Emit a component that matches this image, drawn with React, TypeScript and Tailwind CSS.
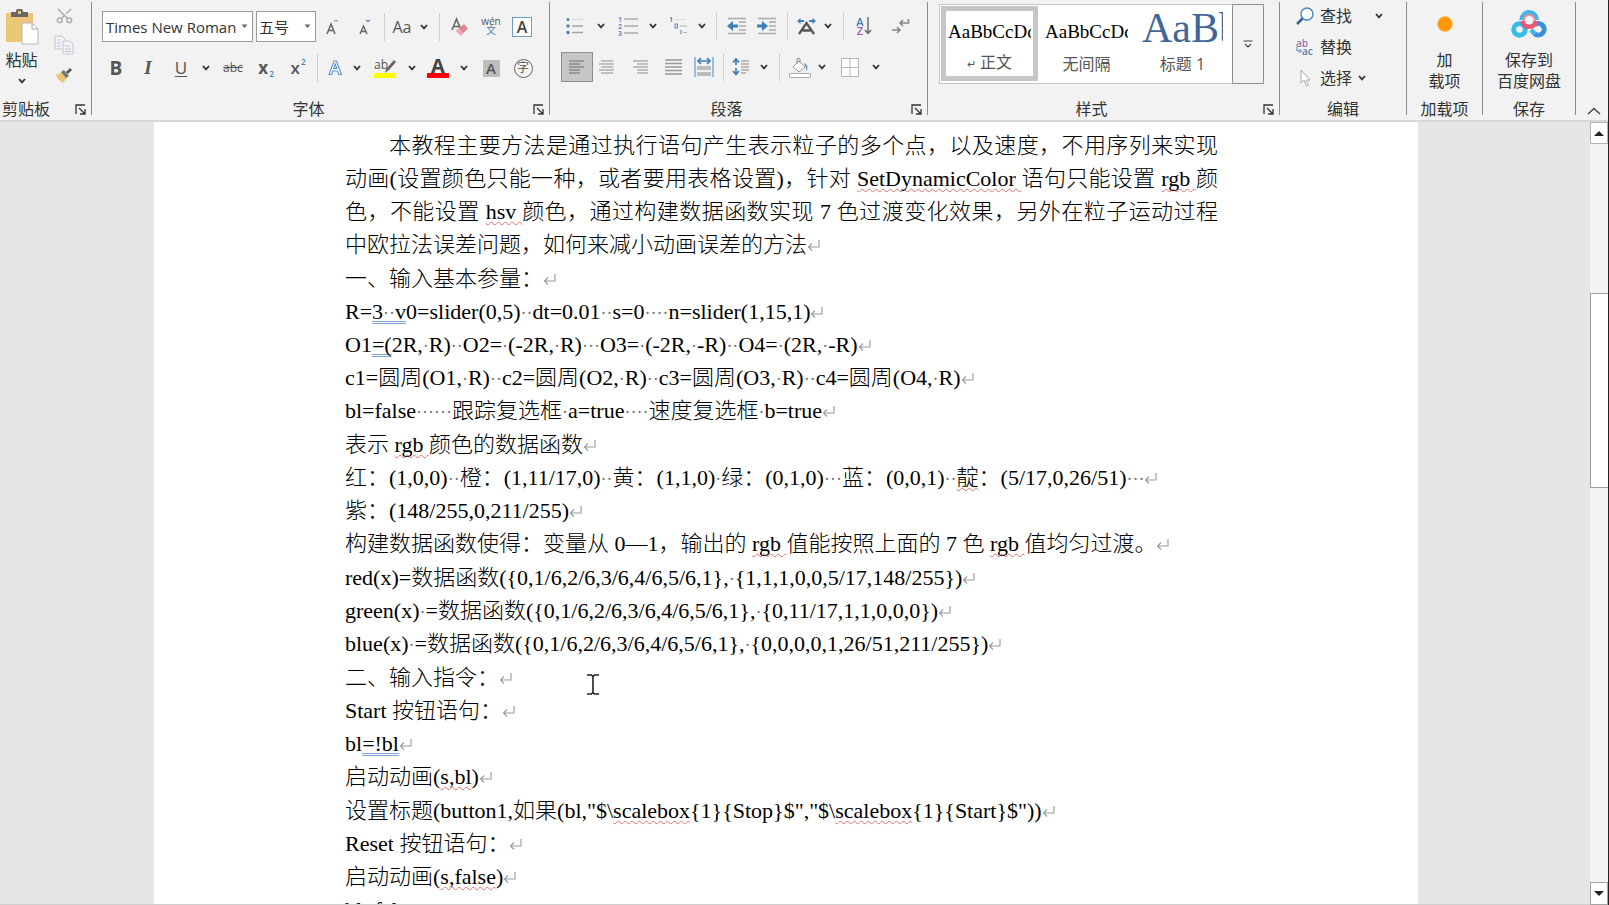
import React from "react";
import { Scissors } from "lucide-react";

interface ToolProps {
  label: string;
  className: string;
  children: React.ReactNode;
}

const Tool: React.FC<ToolProps> = ({ label, className, children }) => (
  <button
    type="button"
    aria-label={label}
    className={`flex h-[30px] shrink-0 items-center justify-center ${className}`}
  >
    {children}
  </button>
);

const Chevron: React.FC = () => (
  <svg width="8" height="6" viewBox="0 0 8 6" fill="none" stroke="#333" strokeWidth="1.8">
    <path d="M1 1l3 3.4L7 1" />
  </svg>
);

const Sep: React.FC<{ className: string }> = ({ className }) => (
  <span className={`h-[28px] w-px shrink-0 bg-[#cfcfcf] ${className}`} />
);

interface GroupProps {
  title: string;
  className: string;
  titleClass?: string;
  launcher?: boolean;
  children: React.ReactNode;
}

const Group: React.FC<GroupProps> = ({ title, className, titleClass = "text-center", launcher, children }) => (
  <section aria-label={title} className={`flex shrink-0 flex-col ${className}`}>
    <div className="h-[98px]">{children}</div>
    <div className="flex h-[22px] items-center">
      <span className={`flex-1 ${titleClass}`}>{title}</span>
      {launcher && (
        <button type="button" aria-label={`${title}设置`} className="mr-[5px]">
          <svg width="11" height="11" viewBox="0 0 11 11" fill="none" stroke="#333" strokeWidth="1.3">
            <path d="M1 10V1h9M4 4l5.5 5.5M10 5v5H5" />
          </svg>
        </button>
      )}
    </div>
  </section>
);

const Divider: React.FC = () => <span className="mt-[2px] h-[113px] w-px shrink-0 bg-[#8c8c8c]" />;

const Triangle: React.FC = () => (
  <svg className="pointer-events-none absolute top-3 right-1" width="9" height="6" viewBox="0 0 9 6">
    <path d="M1.5 1.5h6L4.5 5z" fill="#666" />
  </svg>
);

const ClipboardGroup: React.FC = () => (
  <Group title="剪贴板" launcher className="w-[91px]" titleClass="pl-[2px]">
    <div className="flex">
      <button type="button" className="flex w-[43px] flex-col items-center pt-2">
        <svg width="34" height="37" viewBox="0 0 34 37">
          <path d="M1 5h27v29H1z" fill="#ecc577" />
          <path d="M6 4h5V2.500a2 2 0 0 1 2-1.500h3a2 2 0 0 1 2 1.500V4h5v5H6z" fill="#666" />
          <path d="M13 3h3v3h-3z" fill="#ecc577" />
          <path d="M17 15h10l6 6v15H17z" fill="#fff" stroke="#b5b5b5" />
          <path d="M27 15v6h6" fill="none" stroke="#aaa" />
        </svg>
        <span className="mt-[3px] leading-6">粘贴</span>
        <span className="mt-[6px]">
          <Chevron />
        </span>
      </button>
      <div className="flex flex-col">
        <Tool label="剪切" className="w-[42px]">
          <Scissors size={19} strokeWidth={1.8} color="#aaa" className="-rotate-90" />
        </Tool>
        <Tool label="复制" className="w-[42px]">
          <svg width="20" height="20" viewBox="0 0 20 20" fill="#f5f2f7" stroke="#c8c2cf">
            <path d="M1 1h7l3 3v10H1z" />
            <path d="M9 6h7l3 3v10H9z" />
            <path d="M3 5h4M3 8h4M3 11h4M11 11h5M11 14h6M11 16.500h6" />
          </svg>
        </Tool>
        <Tool label="格式刷" className="w-[42px]">
          <svg width="16" height="15" viewBox="0 0 16 15">
            <path d="M0 7l6-3 5 6-4 5c-2-1-6-4-7-8z" fill="#ecc577" />
            <path d="M5 4l3-2 5 6-3 2z" fill="#777" />
            <path d="M10 4l4-4 2 2-4 4z" fill="#555" />
          </svg>
        </Tool>
      </div>
    </div>
  </Group>
);

const FontGroup: React.FC = () => (
  <Group title="字体" launcher className="w-[457px]" titleClass="pr-2 text-center">
    <div className="flex items-center pt-[11px] pl-[10px]">
      <div className="relative mr-[3px] w-[151px]">
        <select
          aria-label="字体名称"
          className="h-[31px] w-full appearance-none border border-[#9a9a9a] bg-white pl-[3px] text-[15px] leading-6"
        >
          <option>Times New Roman</option>
        </select>
        <Triangle />
      </div>
      <div className="relative w-[60px]">
        <select
          aria-label="字号"
          className="h-[31px] w-full appearance-none border border-[#9a9a9a] bg-white pl-[2px] text-[15px] leading-6"
        >
          <option>五号</option>
        </select>
        <Triangle />
      </div>
      <Tool label="增大字号" className="w-[32px]">
        <svg width="12" height="18" viewBox="0 0 12 18" fill="none" stroke="#666" strokeWidth="1.5">
          <path d="M1 16L5 6l4 10M2.500 12.500h5" />
          <path d="M8 3.500L10 2l2 1.500" stroke="#6b8fb5" strokeWidth="1" />
        </svg>
      </Tool>
      <Tool label="减小字号" className="w-[34px]">
        <svg width="14" height="18" viewBox="0 0 14 18" fill="none" stroke="#666" strokeWidth="1.4">
          <path d="M2 16l3.500-8L9 16M3.500 13.500h4" />
          <path d="M8 2l2 1.500L12 2" stroke="#4d86bf" strokeWidth="1.200" />
        </svg>
      </Tool>
      <Sep className="mx-[2px]" />
      <Tool label="更改大小写" className="w-[30px] text-[16px] text-[#555]">
        Aa
      </Tool>
      <Tool label="大小写选项" className="w-[14px]">
        <Chevron />
      </Tool>
      <Sep className="mx-2" />
      <Tool label="清除格式" className="w-[24px]">
        <svg width="18" height="20" viewBox="0 0 18 20" fill="none">
          <path d="M1 13L5.500 2 10 13M3 9.500h5.500" stroke="#666" strokeWidth="1.6" />
          <path d="M5 14l8-7 4 4.500-7 7z" fill="#e08596" />
          <path d="M5 14l3-2.500 4.500 4.500L10 18.500z" fill="#eda9b4" />
        </svg>
      </Tool>
      <Tool label="拼音指南" className="w-[38px] flex-col text-[10px] text-[#555]">
        <span className="leading-[8px]">wén</span>
        <span className="leading-[11px] text-[#4d7fb8]">文</span>
      </Tool>
      <Tool label="字符边框" className="w-[24px]">
        <span className="flex size-5 items-center justify-center border border-[#6d9dcb] bg-white text-[16px] font-semibold text-[#444]">
          A
        </span>
      </Tool>
    </div>
    <div className="flex items-center pt-[11px] pl-[10px] text-[#555]">
      <Tool label="加粗" className="w-[28px] text-[19px] font-bold">
        B
      </Tool>
      <Tool label="倾斜" className="w-[36px] font-['Liberation_Serif',serif] text-[19px] font-bold italic">
        I
      </Tool>
      <Tool label="下划线" className="w-[30px] text-[17px] underline underline-offset-2">
        U
      </Tool>
      <Tool label="下划线选项" className="w-[20px]">
        <Chevron />
      </Tool>
      <Tool label="删除线" className="w-[34px] text-[12px] line-through">
        abc
      </Tool>
      <Tool label="下标" className="w-[32px] gap-px">
        <span className="text-[17px] font-bold">x</span>
        <span className="pt-3 text-[8px] leading-[8px] font-semibold text-[#3f7fbf]">2</span>
      </Tool>
      <Tool label="上标" className="w-[32px] gap-px">
        <span className="text-[17px] font-semibold">x</span>
        <span className="pb-3 text-[8px] leading-[8px] font-semibold text-[#3f7fbf]">2</span>
      </Tool>
      <Sep className="mx-[3px]" />
      <Tool label="文本效果" className="w-[28px]">
        <svg width="15" height="16" viewBox="0 0 15 16" fill="#fff" stroke="#5b93cf" strokeWidth="1.1">
          <path d="M1 14.500L6 1h2.500l5 13.500h-2.700l-1.200-3.500H4.900l-1.200 3.500zM5.700 8.500h3.200L7.300 4z" />
        </svg>
      </Tool>
      <Tool label="文本效果选项" className="w-[16px]">
        <Chevron />
      </Tool>
      <Tool label="突出显示" className="w-[40px] flex-col">
        <span className="relative block h-[14px] w-[22px] text-left text-[12px] leading-[12px]">
          ab
          <svg className="absolute top-px right-0" width="14" height="13" viewBox="0 0 14 13">
            <path d="M12 0l2 2-7 8-4 3 1-4z" fill="#666" />
          </svg>
        </span>
        <span className="h-[5px] w-[22px] bg-[#ffff00]" />
      </Tool>
      <Tool label="突出显示颜色" className="w-[14px]">
        <Chevron />
      </Tool>
      <Tool label="字体颜色" className="w-[38px] flex-col">
        <span className="text-[20px] leading-[15px] font-bold text-[#444]">A</span>
        <span className="h-[5px] w-[22px] bg-[#fb0000]" />
      </Tool>
      <Tool label="字体颜色选项" className="w-[14px]">
        <Chevron />
      </Tool>
      <Tool label="字符底纹" className="w-[40px]">
        <span className="flex size-[17px] items-center justify-center bg-[#bdbdbd] text-[15px] font-semibold">A</span>
      </Tool>
      <Tool label="带圈字符" className="w-[24px]">
        <span className="flex size-[19px] items-center justify-center rounded-full border border-[#666] text-[12px]">
          字
        </span>
      </Tool>
    </div>
  </Group>
);

const ParagraphGroup: React.FC = () => (
  <Group title="段落" launcher className="w-[377px]" titleClass="pr-2 text-center">
    <div className="flex items-center pt-[11px] pl-[9px]">
      <Tool label="项目符号" className="w-[32px]">
        <svg width="18" height="18" viewBox="0 0 18 18" stroke="#a5a5a5" strokeWidth="1.4">
          <path d="M6 2.500h11" stroke="#ddd" />
          <path d="M6 9h11M6 15.500h11" />
          <g fill="#5580ad" stroke="none">
            <circle cx="2" cy="2.500" r="1.500" />
            <circle cx="2" cy="9" r="1.700" />
            <circle cx="2" cy="15.500" r="1.700" />
          </g>
        </svg>
      </Tool>
      <Tool label="项目符号选项" className="w-[20px]">
        <Chevron />
      </Tool>
      <Tool label="编号" className="w-[34px] gap-[2px]">
        <span className="text-[7px] leading-[7px] font-bold text-[#7a8fc0]">
          1<br />2<br />3
        </span>
        <svg width="14" height="18" viewBox="0 0 14 18" stroke="#aaa" strokeWidth="1.4">
          <path d="M0 2h14M0 9h14M0 16h14" />
        </svg>
      </Tool>
      <Tool label="编号选项" className="w-[16px]">
        <Chevron />
      </Tool>
      <Tool label="多级列表" className="w-[34px]">
        <svg width="18" height="18" viewBox="0 0 18 18" fill="none" stroke="#7a8fc0" strokeWidth="1.2">
          <path d="M1 1.500l1.500-1V5M6 7h2.500v4H6zM12 13v4" />
          <path d="M6 2.500h11" stroke="#ddd" />
          <path d="M11 9h7M14 15.500h4" stroke="#b5b5b5" />
        </svg>
      </Tool>
      <Tool label="多级列表选项" className="w-[14px]">
        <Chevron />
      </Tool>
      <Sep className="mx-[7px]" />
      <Tool label="减少缩进量" className="w-[26px]">
        <svg width="20" height="18" viewBox="0 0 20 18" stroke="#aaa" strokeWidth="1.3">
          <path d="M1 1.500h18M12 5h7M12 9h7M12 13h7M1 16.500h18" />
          <path d="M0 9l6-5v3.500h5v3H6V14z" fill="#3f7fb8" stroke="none" />
        </svg>
      </Tool>
      <Tool label="增加缩进量" className="w-[34px]">
        <svg width="20" height="18" viewBox="0 0 20 18" stroke="#aaa" strokeWidth="1.3">
          <path d="M1 1.500h18M12 5h7M12 9h7M12 13h7M1 16.500h18" />
          <path d="M11 9L5 4v3.500H0v3h5V14z" fill="#3f7fb8" stroke="none" />
        </svg>
      </Tool>
      <Sep className="mx-[3px]" />
      <Tool label="中文版式" className="w-[30px]">
        <svg width="19" height="17" viewBox="0 0 19 17" fill="none">
          <path d="M2 16L9.500 5 17 16M5.500 12.500h8" stroke="#555" strokeWidth="2.300" />
          <path d="M0 3l3.500-3v2H7v2H3.500v2zM19 3l-3.500-3v2H12v2h3.500v2z" fill="#3f7fb8" />
        </svg>
      </Tool>
      <Tool label="中文版式选项" className="w-[14px]">
        <Chevron />
      </Tool>
      <Sep className="mx-2" />
      <Tool label="排序" className="w-[24px]">
        <span className="flex flex-col text-[11px] leading-[9px] font-semibold text-[#3f7fb8]">
          A<span className="text-[#9b59a8]">Z</span>
        </span>
        <svg width="8" height="18" viewBox="0 0 8 18" fill="none" stroke="#666" strokeWidth="1.4">
          <path d="M4 0v16M1 13l3 3.500L7 13" />
        </svg>
      </Tool>
      <Tool label="显示编辑标记" className="w-[50px]">
        <svg width="18" height="16" viewBox="0 0 18 16" fill="none" stroke="#888" strokeWidth="1.6">
          <path d="M16.500 1v4H8M11 2L8 5l3 3M0 12h8M5 9l3 3-3 3" />
        </svg>
      </Tool>
    </div>
    <div className="flex items-center pt-[11px] pl-[11px]">
      <Tool label="左对齐" className="w-[32px] border border-[#8f8f8f] bg-[#c6c6c6]">
        <svg width="16" height="16" viewBox="0 0 16 16" stroke="#8a8a8a" strokeWidth="1.3">
          <path d="M0 2h15M0 5h11M0 8h15M0 11h11M0 14h11" />
        </svg>
      </Tool>
      <Tool label="居中" className="w-[28px]">
        <svg width="16" height="16" viewBox="0 0 16 16" stroke="#b0b0b0" strokeWidth="1.3">
          <path d="M2 2h12M0 5h15M2 8h12M0 11h15M2 14h12" />
        </svg>
      </Tool>
      <Tool label="右对齐" className="w-[38px]">
        <svg width="16" height="16" viewBox="0 0 16 16" stroke="#b0b0b0" strokeWidth="1.3">
          <path d="M1 2h15M5 5h11M1 8h15M5 11h11M5 14h11" />
        </svg>
      </Tool>
      <Tool label="两端对齐" className="w-[28px]">
        <svg width="17" height="18" viewBox="0 0 17 18" stroke="#999" strokeWidth="1.5">
          <path d="M0 2h17M0 5.500h17M0 9h17M0 12.500h17M0 16h17" />
        </svg>
      </Tool>
      <Tool label="分散对齐" className="w-[34px]">
        <svg width="20" height="20" viewBox="0 0 20 20" fill="none">
          <path d="M1 0v20M19 0v20" stroke="#5a9ad4" strokeWidth="1.200" />
          <path d="M3 10h14M3 12h14M3 16h14M3 18h14" stroke="#aaa" strokeWidth="1.400" />
          <path d="M4 4h12M7 1L4 4l3 3M13 1l3 3-3 3" stroke="#3f7fb8" strokeWidth="1.700" />
        </svg>
      </Tool>
      <Sep className="mx-[2px]" />
      <Tool label="行距" className="w-[30px]">
        <svg width="18" height="18" viewBox="0 0 18 18" fill="none">
          <path d="M4 2v5M4 10v6M1 4.500L4 1l3 3.500M1 13l3 3.500L7 13" stroke="#3f7fb8" strokeWidth="1.700" />
          <path d="M9 3h8M9 6h8M9 9h8M9 12h8M9 15h5" stroke="#aaa" strokeWidth="1.300" />
        </svg>
      </Tool>
      <Tool label="行距选项" className="w-[16px]">
        <Chevron />
      </Tool>
      <Sep className="mx-[7px]" />
      <Tool label="底纹" className="w-[26px]">
        <svg width="22" height="21" viewBox="0 0 22 21" fill="none">
          <path d="M4 10l6-6 6 6-6 5z" fill="#fff" stroke="#999" />
          <path d="M8 7V2a2 2 0 0 1 3 0v4" stroke="#888" />
          <path d="M15 6c3 1 4 4 3 8-1-2-1-4-3-8z" fill="#5a8fc8" />
          <path d="M.5 16.500h21v4H.5z" fill="#fff" stroke="#aaa" />
        </svg>
      </Tool>
      <Tool label="底纹选项" className="w-[18px]">
        <Chevron />
      </Tool>
      <Tool label="边框" className="w-[38px]">
        <svg width="18" height="19" viewBox="0 0 18 19" fill="#fff" stroke="#b5b5b5">
          <path d="M.5.5h17v18H.5zM9 .5v18M.5 9.500h17" />
        </svg>
      </Tool>
      <Tool label="边框选项" className="w-[14px]">
        <Chevron />
      </Tool>
    </div>
  </Group>
);

const StylesGroup: React.FC = () => (
  <Group title="样式" launcher className="w-[351px]" titleClass="pr-2 text-center">
    <div className="pt-1 pl-[11px]">
      <div className="flex h-[80px] w-[325px] border border-[#c8c8c8] bg-white text-[#555]">
        <button
          type="button"
          className="mt-px ml-px flex h-[75px] w-[97px] shrink-0 flex-col border-[5px] border-[#c6c6c6] px-[2px]"
        >
          <span className="mt-[9px] w-full overflow-hidden text-left font-['Liberation_Serif',serif] text-[19px] leading-[24px] text-black">
            AaBbCcDd
          </span>
          <span className="mt-[8px] w-full text-center leading-6">
            <small className="text-[11px]">↵</small> 正文
          </span>
        </button>
        <button type="button" className="flex w-[97px] shrink-0 flex-col px-[7px]">
          <span className="mt-[15px] w-full overflow-hidden text-left font-['Liberation_Serif',serif] text-[19px] leading-[24px] text-black">
            AaBbCcDd
          </span>
          <span className="mt-[8px] w-full text-center leading-6">无间隔</span>
        </button>
        <button type="button" className="flex flex-1 flex-col overflow-hidden pr-[10px] pl-[7px]">
          <span className="w-full overflow-hidden text-left font-['Liberation_Serif',serif] text-[42px] leading-[47px] text-[#3f6799]">
            AaBb
          </span>
          <span className="w-full text-center leading-6">标题 1</span>
        </button>
        <button
          type="button"
          aria-label="其他样式"
          className="-m-px flex w-[32px] shrink-0 items-center justify-center border border-[#8f8f8f] bg-[#f2f2f2]"
        >
          <svg width="10" height="9" viewBox="0 0 10 9" fill="none" stroke="#444" strokeWidth="1.2">
            <path d="M.5 1h9M2 4l3 3 3-3" />
          </svg>
        </button>
      </div>
    </div>
  </Group>
);

const EditGroup: React.FC = () => (
  <Group title="编辑" className="w-[126px]">
    <div className="flex flex-col gap-[7px] pt-1 pl-[16px] leading-6">
      <div className="flex items-center">
        <button type="button" className="flex items-center gap-[6px]">
          <svg width="18" height="18" viewBox="0 0 18 18" fill="none">
            <circle cx="11" cy="7" r="6" fill="#fff" stroke="#4a86bd" strokeWidth="1.400" />
            <path d="M6.500 11.500L1 17" stroke="#2f6296" strokeWidth="2.500" />
          </svg>
          查找
        </button>
        <button type="button" aria-label="查找选项" className="ml-[23px]">
          <Chevron />
        </button>
      </div>
      <button type="button" className="flex items-center gap-[6px]">
        <span className="flex w-[18px] flex-col text-left text-[10px] leading-[8px] font-semibold text-[#9275ac]">
          ab
          <span className="flex text-[#5c7f9f]">
            <svg width="6" height="8" viewBox="0 0 6 8" fill="none" stroke="#4a86bd">
              <path d="M1 0v4h4M3.500 2l2 2-2 2" />
            </svg>
            ac
          </span>
        </span>
        替换
      </button>
      <button type="button" className="flex items-center gap-[6px]">
        <svg width="18" height="18" viewBox="0 0 18 18" fill="#fff" stroke="#aaa">
          <path d="M5 1v13l3-3 2.500 6 2-1-2.500-5h4z" />
        </svg>
        选择
        <Chevron />
      </button>
    </div>
  </Group>
);

const Ribbon: React.FC = () => (
  <header className="flex h-[122px] shrink-0 overflow-hidden border-b-2 border-[#d4d8d7] bg-[#f2f2f2] text-[16px] leading-[22px] text-[#333]">
    <ClipboardGroup />
    <Divider />
    <FontGroup />
    <Divider />
    <ParagraphGroup />
    <Divider />
    <StylesGroup />
    <Divider />
    <EditGroup />
    <Divider />
    <Group title="加载项" className="w-[75px]">
      <button type="button" className="flex w-full flex-col items-center pt-[16px] leading-[21px]">
        <span className="mb-[18px] size-4 rounded-full border border-[#fbc77b] bg-[#ff9708]" />
        <span>加</span>
        <span>载项</span>
      </button>
    </Group>
    <Divider />
    <Group title="保存" className="w-[92px]">
      <button type="button" className="flex w-full flex-col items-center pt-[9px] leading-[21px]">
        <svg className="mb-[11px]" width="36" height="30" viewBox="0 0 36 30" fill="none">
          <circle cx="8.500" cy="20.500" r="5.800" stroke="#35bdea" strokeWidth="5" />
          <path d="M23.500 16a5.800 5.800 0 1 1 0 8.600" stroke="#3a90dd" strokeWidth="5" />
          <path d="M12 16.500l4.500-3M23.500 24.600L20 21" stroke="#3fb0e8" strokeWidth="4.500" />
          <path d="M10.800 11a7.400 7.400 0 0 1 14.800 0" stroke="#45b5e8" strokeWidth="5" />
          <circle cx="18.200" cy="11.500" r="5.500" fill="#f2f2f2" stroke="#f08ba0" strokeWidth="2" />
          <path d="M11.300 12a7 7 0 0 0 13.800 0" stroke="#ea5677" strokeWidth="4.500" />
        </svg>
        <span>保存到</span>
        <span>百度网盘</span>
      </button>
    </Group>
    <Divider />
    <div className="flex flex-1 items-end justify-end pr-[7px] pb-[5px]">
      <button type="button" aria-label="折叠功能区">
        <svg width="14" height="8" viewBox="0 0 14 8" fill="none" stroke="#444" strokeWidth="1.4">
          <path d="M1 7l6-5.500L13 7" />
        </svg>
      </button>
    </div>
  </header>
);

// Space marks are shown as middle dots, lighter and smaller than the text.
const T: React.FC<{ s: string }> = ({ s }) => (
  <>
    {s.split(/(·+)/).map((part, i) =>
      part.startsWith("·") ? (
        <span key={i} className="text-[18px] leading-none text-[#777]">
          {part}
        </span>
      ) : (
        part
      )
    )}
  </>
);

const Err: React.FC<{ s: string }> = ({ s }) => (
  <span className="whitespace-pre-wrap underline decoration-[#dc7272] decoration-wavy decoration-1 underline-offset-2 [text-decoration-skip-ink:none]">
    {s}
  </span>
);

const Gram: React.FC<{ s: string }> = ({ s }) => (
  <span className="underline decoration-[#7ea3d6] decoration-double decoration-1 underline-offset-2 [text-decoration-skip-ink:none]">
    <T s={s} />
  </span>
);

const Mark: React.FC = () => (
  <svg className="inline-block" width="13" height="14" viewBox="0 0 13 14" fill="none" stroke="#999" strokeWidth="1.1">
    <path d="M12 0v7H1.500M5 3.500L1.500 7 5 10.500" />
  </svg>
);

const Document: React.FC = () => (
  <article className="relative flex w-[1264px] shrink-0 flex-col gap-px overflow-hidden bg-white pt-[7px] pr-[200px] pl-[191px] font-['Liberation_Serif','Noto_Sans_CJK_SC',serif] text-[22px] leading-[33px] font-light text-black">
    <p className="text-justify indent-[2em]">
      本教程主要方法是通过执行语句产生表示粒子的多个点，以及速度，不用序列来实现动画(设置颜色只能一种，或者要用表格设置)，针对{" "}
      <Err s="SetDynamicColor " />
      语句只能设置 <Err s="rgb " />
      颜色，不能设置 <Err s="hsv " />
      颜色，通过构建数据函数实现 7 色过渡变化效果，另外在粒子运动过程中欧拉法误差问题，如何来减小动画误差的方法
      <Mark />
    </p>
    <section>
      <h2>
        一、输入基本参量：
        <Mark />
      </h2>
      <p>
        R=
        <Gram s="3··v" />
        <T s="0=slider(0,5)··dt=0.01··s=0····n=slider(1,15,1)" />
        <Mark />
      </p>
      <p>
        O1
        <Gram s="=(" />
        <T s="2R,·R)··O2=·(-2R,·R)···O3=·(-2R,·-R)··O4=·(2R,·-R)" />
        <Mark />
      </p>
      <p>
        <T s="c1=圆周(O1,·R)··c2=圆周(O2,·R)··c3=圆周(O3,·R)··c4=圆周(O4,·R)" />
        <Mark />
      </p>
      <p>
        <T s="bl=false······跟踪复选框·a=true····速度复选框·b=true" />
        <Mark />
      </p>
    </section>
    <section>
      <p>
        表示 <Err s="rgb " />
        颜色的数据函数
        <Mark />
      </p>
      <p>
        <T s="红：(1,0,0)··橙：(1,11/17,0)··黄：(1,1,0)·绿：(0,1,0)···蓝：(0,0,1)··" />
        <Err s="靛" />
        <T s="：(5/17,0,26/51)···" />
        <Mark />
      </p>
      <p>
        紫：(148/255,0,211/255)
        <Mark />
      </p>
      <p className="whitespace-nowrap">
        构建数据函数使得：变量从 0—1，输出的 <Err s="rgb " />
        值能按照上面的 7 色 <Err s="rgb " />
        值均匀过渡。
        <Mark />
      </p>
    </section>
    <section>
      <p>
        <T s="red(x)=数据函数({0,1/6,2/6,3/6,4/6,5/6,1},·{1,1,1,0,0,5/17,148/255})" />
        <Mark />
      </p>
      <p>
        <T s="green(x)·=数据函数({0,1/6,2/6,3/6,4/6,5/6,1},·{0,11/17,1,1,0,0,0})" />
        <Mark />
      </p>
      <p>
        <T s="blue(x)·=数据函数({0,1/6,2/6,3/6,4/6,5/6,1},·{0,0,0,0,1,26/51,211/255})" />
        <Mark />
      </p>
    </section>
    <section>
      <h2>
        二、输入指令：
        <Mark />
      </h2>
      <p>
        Start 按钮语句：
        <Mark />
      </p>
      <p>
        bl
        <Gram s="=!bl" />
        <Mark />
      </p>
      <p>
        启动动画(
        <Err s="s,bl" />)<Mark />
      </p>
    </section>
    <section>
      <p>
        {'设置标题(button1,如果(bl,"$\\'}
        <Err s="scalebox" />
        {'{1}{Stop}$","$\\'}
        <Err s="scalebox" />
        {'{1}{Start}$"))'}
        <Mark />
      </p>
      <p>
        Reset 按钮语句：
        <Mark />
      </p>
      <p>
        启动动画(
        <Err s="s,false" />)<Mark />
      </p>
      <p>
        bl=false
        <Mark />
      </p>
    </section>
    {/* text pointer */}
    <svg className="absolute top-[552px] left-[433px]" width="12" height="21" viewBox="0 0 12 21" fill="none" stroke="#222" strokeWidth="1.6">
      <path d="M0 1h4.500L6 2.500 7.500 1H12M6 2v17M0 20h4.500L6 18.500 7.500 20H12" />
    </svg>
  </article>
);

const ScrollBar: React.FC = () => (
  <div className="flex w-[18px] shrink-0 flex-col bg-[#f3f3f3]">
    <button type="button" aria-label="向上滚动" className="flex h-[22px] items-center justify-center border border-[#b5b5b5] bg-white">
      <svg width="10" height="5" viewBox="0 0 10 5">
        <path d="M0 5l5-5 5 5z" fill="#222" />
      </svg>
    </button>
    <span className="flex-[149]" />
    <span className="flex-[193] border border-r-0 border-[#a0a0a0] bg-white" />
    <span className="flex-[395]" />
    <button type="button" aria-label="向下滚动" className="flex h-[23px] items-center justify-center border border-[#a5a5a5] bg-white">
      <svg width="10" height="5" viewBox="0 0 10 5">
        <path d="M0 0l5 5 5-5z" fill="#222" />
      </svg>
    </button>
  </div>
);

const App: React.FC = () => {
  return (
    <div className="flex h-screen flex-col overflow-hidden border-r border-[#222] bg-[#e6e6e6] font-['Open_Sans','Noto_Sans_CJK_SC',sans-serif]">
      <Ribbon />
      <div className="flex min-h-0 flex-1">
        <main className="flex min-w-0 flex-1 justify-center overflow-hidden border-b border-[#cfcfcf] pr-[18px]">
          <Document />
        </main>
        <ScrollBar />
      </div>
    </div>
  );
};

export default App;
